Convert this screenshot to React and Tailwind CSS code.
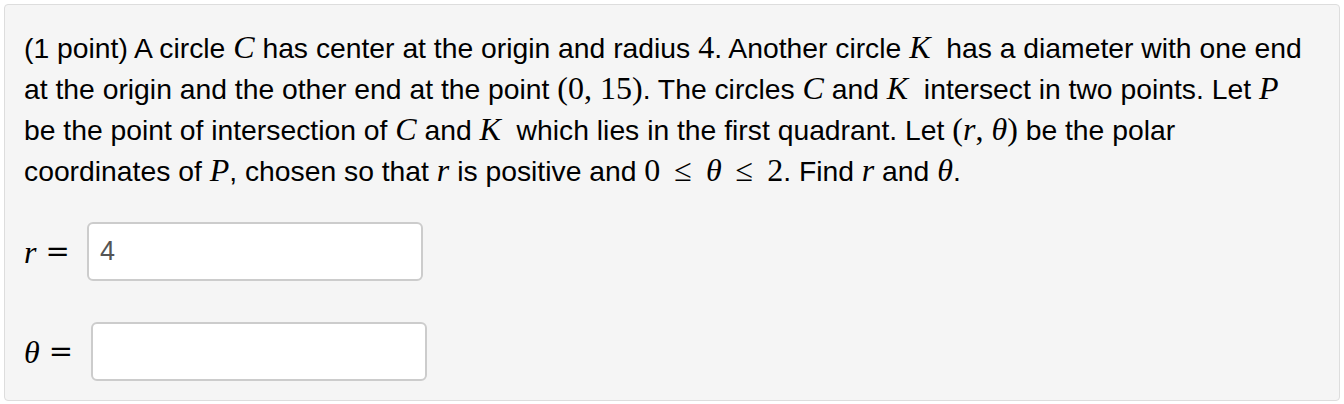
import React from 'react';

const M = ({ children, i = true }) => (
  <span className={`font-['Liberation_Serif',serif] text-[32px] ${i ? 'italic' : ''}`}>{children}</span>
);

const Eq = () => (
  <span className="font-['DejaVu_Serif',serif] text-[29px] ml-[9px]">=</span>
);

const Le = () => <span className="mx-[14px]">≤</span>;

const App = () => {
  return (
    <div className="w-[1344px] h-[404px] bg-white p-[4px] font-['Liberation_Sans',Arial,sans-serif]">
      <div className="h-[397px] w-[1336px] bg-[#f5f5f5] border border-[#dddddd] rounded-[4px] pl-[19px] pr-2 pt-[22px]">
        <div className="text-[28.3px] leading-[40px] text-black whitespace-nowrap">
          <div>(1 point) A circle <M>C</M> has center at the origin and radius <M i={false}>4</M>. Another circle <M>K</M>&nbsp; has a diameter with one end</div>
          <div>at the origin and the other end at the point <M i={false}>(0, 15)</M>. The circles <M>C</M> and <M>K</M>&nbsp; intersect in two points. Let <M>P</M></div>
          <div>be the point of intersection of <M>C</M> and <M>K</M>&nbsp; which lies in the first quadrant. Let <M i={false}>(<i>r</i>, <i>θ</i>)</M> be the polar</div>
          <div>coordinates of <M>P</M>, chosen so that <M>r</M> is positive and <M i={false}>0<Le /><i>θ</i><Le />2</M>. Find <M>r</M> and <M>θ</M>.</div>
        </div>
        <div className="mt-[31px] flex items-center gap-[12px]">
          <span className="font-['Liberation_Serif',serif] text-[32px] w-[51px] whitespace-nowrap flex items-center"><i>r</i><Eq /></span>
          <div className="w-[336px] h-[59px] bg-white border-2 border-[#cccccc] rounded-[6px] flex items-center px-[11px] text-[27px] text-[#555555]">4</div>
        </div>
        <div className="mt-[41px] flex items-center gap-[12px]">
          <span className="font-['Liberation_Serif',serif] text-[32px] w-[55px] whitespace-nowrap flex items-center"><i>θ</i><Eq /></span>
          <div className="w-[336px] h-[59px] bg-white border-2 border-[#cccccc] rounded-[6px]"></div>
        </div>
      </div>
    </div>
  );
};

export default App;
